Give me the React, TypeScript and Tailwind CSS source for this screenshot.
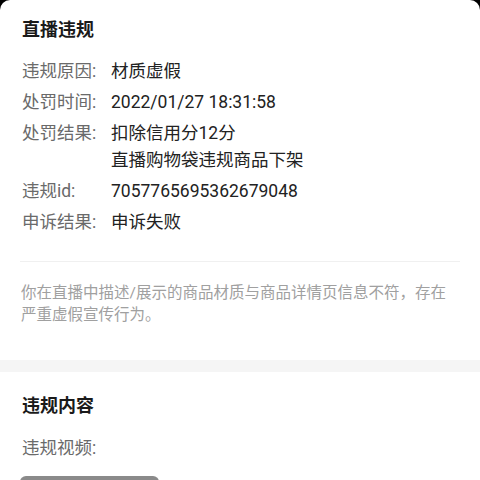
import React from "react";

const font = { fontFamily: "Roboto, 'Noto Sans CJK SC', 'Noto Sans', sans-serif" };

function Row({ label, values }: { label: string; values: string[] }) {
  return (
    <div className="flex text-[17.5px] leading-[27px]">
      <div className="w-[89px] shrink-0 text-[#6a6a6a]">{label}</div>
      <div className="flex flex-col text-[#222222]">
        {values.map((v) => (
          <div key={v}>{v}</div>
        ))}
      </div>
    </div>
  );
}

export default function App() {
  return (
    <div className="h-[480px] w-[480px] overflow-hidden bg-black" style={font}>
      <div className="h-full rounded-t-[10px] bg-white">
        <div className="px-[22px] pt-[18px]">
          <div className="text-[18px] font-bold leading-[24px] text-[#1a1a1a]">直播违规</div>
          <div className="mt-[16px] flex flex-col gap-[4px]">
            <Row label="违规原因:" values={["材质虚假"]} />
            <Row label="处罚时间:" values={["2022/01/27 18:31:58"]} />
            <Row label="处罚结果:" values={["扣除信用分12分", "直播购物袋违规商品下架"]} />
            <Row label="违规id:" values={["7057765695362679048"]} />
            <Row label="申诉结果:" values={["申诉失败"]} />
          </div>
        </div>
        <div className="mx-[20px] mt-[25px] h-px bg-[#f0f0f0]" />
        <div className="pl-[21px] pr-[27px] pt-[20px] pb-[34px] text-[15.5px] leading-[22px] text-[#a0a0a0]">
          你在直播中描述/展示的商品材质与商品详情页信息不符，存在严重虚假宣传行为。
        </div>
        <div className="h-[12px] bg-[#f5f5f5]" />
        <div className="px-[22px] pt-[22px]">
          <div className="text-[18px] font-bold leading-[24px] text-[#1a1a1a]">违规内容</div>
          <div className="mt-[17px] text-[17.5px] leading-[27px] text-[#6a6a6a]">违规视频:</div>
          <div className="mt-[14px] ml-[-2px] h-[60px] w-[139px] rounded-[6px] bg-[#8a8a8a]" />
        </div>
      </div>
    </div>
  );
}
